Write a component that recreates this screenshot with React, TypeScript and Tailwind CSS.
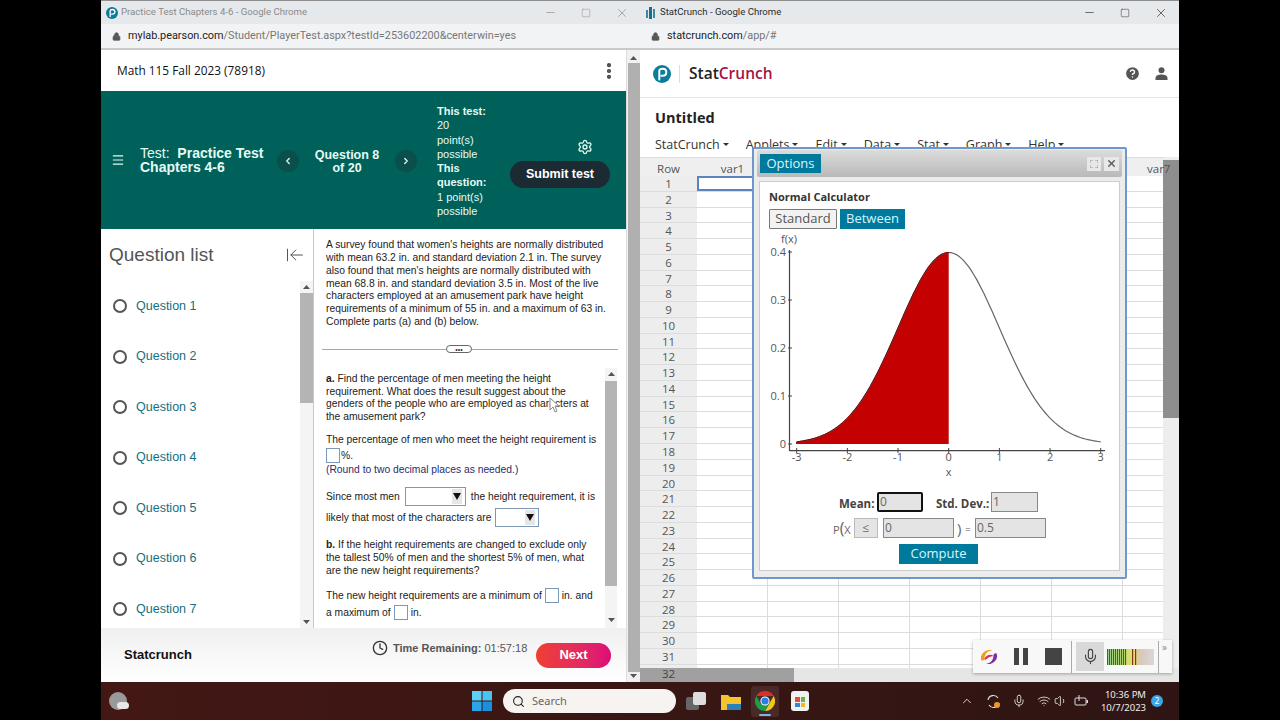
import React from "react";
import { Settings, Menu, ChevronLeft, ChevronRight, Clock, Search, Lock, X, Minus, Square, ArrowLeftToLine, ChevronUp, Mic, Wifi, Volume1, CircleHelp, EllipsisVertical } from "lucide-react";

const sans = "font-['Liberation_Sans',Arial,sans-serif]";
const open = "font-['Open_Sans','Noto_Sans',sans-serif]";

function PearsonLogo({ size }: { size: number }) {
  return (
    <svg width={size} height={size} viewBox="0 0 20 20" className="shrink-0">
      <circle cx="10" cy="10" r="10" fill="#0b7c99" />
      <path d="M7 16 V6.5 C7 5 8.5 4.2 10.5 4.2 C13 4.2 14.8 5.6 14.8 8 C14.8 10.4 13 11.9 10.6 11.9 L9.4 11.9" fill="none" stroke="#fff" strokeWidth="2.2" strokeLinecap="round" />
    </svg>
  );
}

function TitleBar({ title, icon, dim }: { title: string; icon: React.ReactNode; dim?: boolean }) {
  const c = dim ? "text-[#8a8a8a]" : "text-[#2b2b2b]";
  return (
    <div className="h-[24px] shrink-0 flex items-center bg-[#e6e9ec] border-t border-[#8f8f8f] pl-[4px]">
      <div className="w-[14px] flex justify-center">{icon}</div>
      <span className={`ml-[2px] text-[9.6px] font-['Roboto',sans-serif] ${c} flex-1 whitespace-nowrap`}>{title}</span>
      <div className={`flex items-center gap-[24px] pr-[11px] ${c}`}>
        <Minus size={13} strokeWidth={1.2} />
        <Square size={10} strokeWidth={1.2} />
        <X size={14} strokeWidth={1.2} />
      </div>
    </div>
  );
}

function UrlBar({ host, rest }: { host: string; rest: string }) {
  return (
    <div className="h-[26px] shrink-0 flex items-center bg-[#f2f3f4] border-b-2 border-[#c9c9c9] pl-[11px]">
      <Lock size={9} fill="#555" className="text-[#555]" />
      <span className="ml-[7px] text-[10.85px] font-['Roboto',sans-serif] whitespace-nowrap">
        <span className="text-[#222]">{host}</span>
        <span className="text-[#777]">{rest}</span>
      </span>
    </div>
  );
}

function Arrow({ dir, cls }: { dir: "up" | "down"; cls?: string }) {
  return (
    <svg width="7" height="4" viewBox="0 0 7 4" className={cls}>
      <path d={dir === "up" ? "M0 4 L3.5 0 L7 4 Z" : "M0 0 L3.5 4 L7 0 Z"} fill="#555" />
    </svg>
  );
}

function Blank({ w = 14, h = 15 }: { w?: number; h?: number }) {
  return <span style={{ width: w, height: h }} className="inline-block align-middle border border-[#7d97b8] bg-white" />;
}

function Drop({ w }: { w: number }) {
  return (
    <span style={{ width: w }} className="inline-flex h-[19px] align-middle justify-end items-center border border-[#7d97b8] bg-white pr-[3px]">
      <span className="w-[10px] h-[15px] bg-[#e6e6e6] flex items-center justify-center">
        <svg width="8" height="7" viewBox="0 0 8 7"><path d="M0 0 H8 L4 7 Z" fill="#111" /></svg>
      </span>
    </span>
  );
}

function LeftWindow() {
  const qs = [1, 2, 3, 4, 5, 6, 7];
  return (
    <div className="w-[539px] h-[682px] flex flex-col bg-white relative overflow-hidden">
      <TitleBar title="Practice Test Chapters 4-6 - Google Chrome" dim icon={<PearsonLogo size={12} />} />
      <UrlBar host="mylab.pearson.com" rest="/Student/PlayerTest.aspx?testId=253602200&centerwin=yes" />
      <div className="flex-1 flex min-h-0">
        <div className="w-[525px] flex flex-col min-h-0">
          <div className="h-[41px] shrink-0 flex items-center justify-between pl-[16px] pr-[7px] bg-white">
            <span className={`text-[11.85px] text-[#111] ${open}`}>Math 115 Fall 2023 (78918)</span>
            <EllipsisVertical size={20} strokeWidth={3} className="text-[#444]" />
          </div>
          <div className={`h-[138px] shrink-0 bg-[#00605a] flex items-center text-[#e4fbf5] ${sans}`}>
            <Menu size={14} className="ml-[10px] shrink-0" />
            <div className="ml-[15px] w-[130px] text-[14px] leading-[14.5px]">
              Test:&nbsp; <b>Practice Test Chapters 4-6</b>
            </div>
            <div className="ml-[7px] mt-[2px] w-[22px] h-[22px] rounded-full bg-[#0b4f4c] flex items-center justify-center"><ChevronLeft size={10} strokeWidth={3} /></div>
            <div className="w-[96px] mt-[3px] text-center text-[12.5px] leading-[13px] font-bold">Question 8<br />of 20</div>
            <div className="mt-[2px] w-[22px] h-[22px] rounded-full bg-[#0b4f4c] flex items-center justify-center"><ChevronRight size={10} strokeWidth={3} /></div>
            <div className="ml-[20px] mt-[2px] w-[56px] text-[11px] leading-[14.25px]">
              <b>This test:</b><br />20<br />point(s)<br />possible<br /><b>This question:</b><br />1 point(s)<br />possible
            </div>
            <div className="ml-[17px] w-[100px] flex flex-col items-end mt-[7px]">
              <Settings size={16} className="mb-[6px] mr-[17px]" />
              <div className="w-[100px] h-[27px] rounded-full bg-[#1b2a33] text-white text-[12.5px] font-bold flex items-center justify-center">Submit test</div>
            </div>
          </div>
          <div className="flex-1 flex min-h-0">
            <div className="w-[213px] shrink-0 border-r border-[#c8c8c8] flex flex-col min-h-0 overflow-hidden">
              <div className="h-[52px] shrink-0 flex items-center justify-between pl-[8px] pr-[8px]">
                <span className={`text-[19px] text-[#555] ${sans}`}>Question list</span>
                <ArrowLeftToLine size={20} strokeWidth={1.2} className="text-[#555]" />
              </div>
              <div className="flex-1 flex min-h-0">
                <div className="w-[199px] flex flex-col">
                  {qs.map((q) => (
                    <div key={q} className="h-[50.5px] shrink-0 flex items-center pl-[12px]">
                      <span className="w-[14px] h-[14px] rounded-full border-2 border-[#555]" />
                      <span className={`ml-[9px] text-[12.5px] text-[#14707f] ${sans}`}>Question {q}</span>
                    </div>
                  ))}
                </div>
                <div className="w-[13px] bg-[#f4f4f4] flex flex-col items-center pt-[4px] pb-[4px]">
                  <Arrow dir="up" />
                  <div className="mt-[4px] w-full h-[110px] bg-[#b4b4b4]" />
                  <div className="flex-1" />
                  <Arrow dir="down" />
                </div>
              </div>
            </div>
            <div className={`flex-1 flex flex-col min-h-0 ${sans} text-[#222] text-[10.3px]`}>
              <div className="h-[112px] shrink-0 pl-[12px] pt-[10px] leading-[12.85px] whitespace-nowrap">
                A survey found that women's heights are normally distributed<br />
                with mean 63.2 in. and standard deviation 2.1 in. The survey<br />
                also found that men's heights are normally distributed with<br />
                mean 68.8 in. and standard deviation 3.5 in. Most of the live<br />
                characters employed at an amusement park have height<br />
                requirements of a minimum of 55 in. and a maximum of 63 in.<br />
                Complete parts (a) and (b) below.
              </div>
              <div className="h-[16px] shrink-0 flex items-center pl-[8px] pr-[8px]">
                <div className="w-[124px] h-px bg-[#a8a8a8]" />
                <div className="w-[26px] h-[8px] rounded-full border border-[#666] bg-white flex items-center justify-center text-[7px] leading-none text-[#333]">•••</div>
                <div className="flex-1 h-px bg-[#a8a8a8]" />
              </div>
              <div className="flex-1 flex min-h-0 pl-[12px] pr-[8px]">
                <div className="w-[279px] pt-[16px] whitespace-nowrap overflow-hidden">
                  <p className="leading-[12.6px]"><b>a.</b> Find the percentage of men meeting the height<br />requirement. What does the result suggest about the<br />genders of the people who are employed as characters at<br />the amusement park?</p>
                  <p className="mt-[10px] leading-[13px]">The percentage of men who meet the height requirement is</p>
                  <p className="mt-[1px] h-[16px] flex items-center"><Blank /><span className="ml-[1px]">%.</span></p>
                  <p className="leading-[13px] text-[#2b2b6e]">(Round to two decimal places as needed.)</p>
                  <p className="mt-[11px] h-[19px] flex items-center gap-[5px]">Since most men <Drop w={61} /> the height requirement, it is</p>
                  <p className="h-[20px] mt-[1px] flex items-center gap-[4px]">likely that most of the characters are <Drop w={44} /></p>
                  <p className="mt-[12px] leading-[12.6px]"><b>b.</b> If the height requirements are changed to exclude only<br />the tallest 50% of men and the shortest 5% of men, what<br />are the new height requirements?</p>
                  <p className="mt-[10px] h-[17px] flex items-center gap-[3px]">The new height requirements are a minimum of <Blank /> in. and</p>
                  <p className="h-[17px] flex items-center gap-[3px]">a maximum of <Blank /> in.</p>
                </div>
                <div className="w-[12px] bg-[#f4f4f4] flex flex-col items-center mt-[11px] pt-[4px] pb-[6px]">
                  <Arrow dir="up" />
                  <div className="mt-[5px] w-full h-[205px] bg-[#b4b4b4]" />
                  <div className="flex-1" />
                  <Arrow dir="down" />
                </div>
              </div>
            </div>
          </div>
          <div className={`h-[54px] shrink-0 bg-gradient-to-b from-[#f0f0f0] to-white flex items-center ${sans}`}>
            <span className="ml-[23px] w-[65px] text-[13px] font-bold text-[#111]">Statcrunch</span>
            <div className="ml-[183px] flex items-center mt-[-14px] w-[162px]">
              <Clock size={16} className="text-[#333]" />
              <span className="ml-[5px] text-[11px] font-bold text-[#555] whitespace-nowrap">Time Remaining:</span>
              <span className="ml-[3px] text-[11px] text-[#555]">01:57:18</span>
            </div>
            <div className="ml-[2px] w-[75px] h-[25px] rounded-full bg-gradient-to-r from-[#ee3f2f] to-[#dc0a78] text-white text-[13px] font-bold flex items-center justify-center">Next</div>
          </div>
        </div>
        <div className="w-[14px] bg-[#f1f1f1] flex flex-col items-center pt-[6px] pb-[4px] border-l border-[#ddd]">
          <Arrow dir="up" />
          <div className="mt-[3px] w-[12px] flex-1 bg-[#b0b0b0]" />
          <Arrow dir="down" cls="mt-[2px]" />
        </div>
      </div>
      <svg width="12" height="16" viewBox="0 0 12 16" className="absolute left-[448px] top-[397px]">
        <path d="M1 1 V13 L4 10 L6 15 L8 14 L6 9 H10 Z" fill="#fff" stroke="#8a8a8a" strokeWidth="1" />
      </svg>
    </div>
  );
}

function NormalChart() {
  const X = (x: number) => 188.7 + x * 50.67;
  const Y = (d: number) => 212 - d * 480;
  const pdf = (x: number) => Math.exp((-x * x) / 2) / Math.sqrt(2 * Math.PI);
  const pts: string[] = [];
  for (let x = -3; x <= 3.001; x += 0.05) pts.push(`${X(x).toFixed(1)},${Y(pdf(x)).toFixed(1)}`);
  const half: string[] = [];
  for (let x = -3; x <= 0.001; x += 0.05) half.push(`${X(x).toFixed(1)},${Y(pdf(x)).toFixed(1)}`);
  const area = `M${X(-3)},${Y(0)} L${half.join(" L")} L${X(0)},${Y(0)} Z`;
  const txt = "fill-[#555] text-[11px] font-['Open_Sans','Noto_Sans',sans-serif]";
  return (
    <svg width="358" height="258" viewBox="0 0 358 258" className="block">
      <text x="21" y="11" className={txt}>f(x)</text>
      <path d={area} fill="#c40000" />
      <polyline points={pts.join(" ")} fill="none" stroke="#666" strokeWidth="1.2" />
      <path d={`M${X(-3)},${Y(0)} L${half.join(" L")}`} fill="none" stroke="#7a0000" strokeWidth="1" />
      <path d="M29.5 18 V219 M29.5 218.7 H345" stroke="#444" strokeWidth="1.2" fill="none" />
      {[0, 1, 2, 3, 4].map((i) => (
        <g key={i}>
          <path d={`M28 ${Y(i / 10)} H32`} stroke="#444" strokeWidth="1" />
          <text x="26" y={Y(i / 10) + 4} textAnchor="end" className={txt}>{i === 0 ? "0" : `0.${i}`}</text>
        </g>
      ))}
      {[-3, -2, -1, 0, 1, 2, 3].map((v) => (
        <g key={v}>
          <path d={`M${X(v)} 216 V221`} stroke="#444" strokeWidth="1" />
          <text x={X(v)} y="229" textAnchor="middle" className={txt}>{v}</text>
        </g>
      ))}
      <text x={X(0)} y="244" textAnchor="middle" className={txt}>x</text>
    </svg>
  );
}

function Field({ v, w, cls = "border border-[#888]" }: { v: string; w: number; cls?: string }) {
  return (
    <span style={{ width: w }} className={`inline-flex h-[20px] items-center pl-[1px] bg-[#e4e4e4] text-[12px] font-normal text-[#666] ${cls}`}>{v}</span>
  );
}

function Dialog() {
  return (
    <div className={`absolute z-20 left-[112px] top-[147px] w-[375px] h-[432px] bg-[#ececec] border-2 border-[#6f97cb] rounded-[2px] px-[3px] pt-[1px] pb-[3px] flex flex-col ${open}`}>
      <div className="h-[27px] shrink-0 rounded-[2px] bg-gradient-to-b from-[#dcdcdc] to-[#b9b9b9] flex items-center pl-[3px] pr-[3px]">
        <div className="w-[61px] h-[19px] bg-[#007a9c] text-[#d8f6ff] text-[13px] flex items-center justify-center">Options</div>
        <div className="flex-1" />
        <div className="w-[14px] h-[14px] bg-[#e8e8e8] mr-[3px] flex items-center justify-center">
          <svg width="8" height="8" viewBox="0 0 8 8"><path d="M0 3V0H3M5 0H8V3M8 5V8H5M3 8H0V5" fill="none" stroke="#999" /></svg>
        </div>
        <div className="w-[15px] h-[14px] bg-[#e8e8e8] flex items-center justify-center"><X size={11} strokeWidth={3.5} className="text-[#666]" /></div>
      </div>
      <div className="mt-[4px] flex-1 min-h-0 bg-white border border-[#ccc] mx-[2px] mb-[3px] flex flex-col">
        <div className="pl-[9px] pt-[7px] h-[27px] text-[11px] font-bold text-[#333]">Normal Calculator</div>
        <div className="pl-[9px] flex gap-[3px] text-[13px]">
          <div className="w-[68px] h-[20px] border border-[#777] rounded-[1px] bg-[#f2f2f2] text-[#555] flex items-center justify-center">Standard</div>
          <div className="w-[65px] h-[20px] bg-[#007a9c] text-[#d8f6ff] flex items-center justify-center">Between</div>
        </div>
        <div className="mt-[3px]"><NormalChart /></div>
        <div className="mt-[2px] h-[20px] flex items-center pl-[79px] text-[11.5px] font-bold text-[#444]">
          <span className="w-[38px] mt-[3px]">Mean:</span>
          <Field v="0" w={46} cls="border-2 border-[#111] rounded-[2px]" />
          <span className="ml-[13px] w-[55px] mt-[3px] whitespace-nowrap">Std. Dev.:</span>
          <Field v="1" w={47} />
        </div>
        <div className="mt-[6px] h-[20px] flex items-center pl-[73px] text-[#666]">
          <span className="w-[21px] text-[11px] whitespace-nowrap">P<span className="text-[16px]">(</span>X</span>
          <span className="w-[24px] h-[20px] bg-[#e4e4e4] border border-[#bbb] text-[12px] flex items-center justify-center">≤</span>
          <Field v="0" w={71} cls="ml-[5px] border border-[#888]" />
          <span className="ml-[3px] text-[15px] w-[7px]">)</span>
          <span className="ml-[1px] w-[10px] text-[10px] mt-[2px]">=</span>
          <Field v="0.5" w={71} />
        </div>
        <div className="mt-[6px] flex pl-[139px]">
          <div className="w-[79px] h-[20px] bg-[#007a9c] text-[#d8f6ff] text-[13px] flex items-center justify-center">Compute</div>
        </div>
      </div>
    </div>
  );
}

function Recorder() {
  return (
    <div className="absolute z-20 left-[333px] top-[640px] w-[199px] h-[33px] bg-[#f8f8f8] shadow-[0_1px_3px_rgba(0,0,0,0.3)] flex items-center">
      <svg width="22" height="22" viewBox="0 0 20 20" className="ml-[5px]">
        <path d="M3 13 C1 7 8 2 13 4 C9 4 6 7 6 11 C6 13 4 14 3 13 Z" fill="#e8a020" />
        <path d="M17 7 C19 13 12 18 7 16 C11 16 14 13 14 9 C14 7 16 6 17 7 Z" fill="#7b2fa5" />
        <path d="M6 11 C8 8 12 7 14 9 C11 9 9 11 6 13 Z" fill="#d83050" />
      </svg>
      <div className="ml-[14px] flex gap-[4px]"><span className="w-[5px] h-[17px] bg-[#444]" /><span className="w-[5px] h-[17px] bg-[#444]" /></div>
      <span className="ml-[17px] w-[17px] h-[17px] bg-[#444]" />
      <span className="ml-[9px] w-px h-[32px] bg-[#aaa]" />
      <div className="ml-[4px] w-[28px] h-[29px] bg-[#d9d9d9] flex items-center justify-center"><Mic size={17} strokeWidth={1.6} className="text-[#444]" /></div>
      <svg width="47" height="16" viewBox="0 0 47 16" className="ml-[3px]">
        <defs>
          <linearGradient id="fade" x1="0" x2="1" y1="0" y2="0">
            <stop offset="0" stopColor="#a8d8a0" />
            <stop offset="0.42" stopColor="#cde070" />
            <stop offset="0.55" stopColor="#e8e060" />
            <stop offset="0.7" stopColor="#d8c8b8" />
            <stop offset="1" stopColor="#d8d8d8" />
          </linearGradient>
        </defs>
        <rect x="0" y="0" width="47" height="16" fill="url(#fade)" />
        {Array.from({ length: 10 }).map((_, i) => (
          <rect key={i} x={i * 2} y="0" width="1.1" height="16" fill="#1c7a1c" />
        ))}
        <rect x="25" y="0" width="1.2" height="16" fill="#8a3030" />
        <rect x="28" y="0" width="1.2" height="16" fill="#8a3030" />
      </svg>
      <span className="ml-[4px] w-px h-[32px] bg-[#aaa]" />
      <span className="ml-[3px] text-[10px] text-[#888] self-start leading-[12px] mt-[1px]">»</span>
    </div>
  );
}

function RightWindow() {
  const rows = Array.from({ length: 32 }, (_, i) => i + 1);
  const cols = [0, 1, 2, 3, 4, 5];
  return (
    <div className={`w-[539px] h-[682px] flex flex-col bg-white relative overflow-hidden ${open}`}>
      <TitleBar title="StatCrunch - Google Chrome" icon={<svg width="10" height="12" viewBox="0 0 10 12"><rect x="0" y="3" width="2" height="8" fill="#3a8aa8" /><rect x="3" y="0" width="3" height="12" fill="#1f6d8c" /><rect x="7" y="2" width="2" height="9" fill="#3a8aa8" /></svg>} />
      <UrlBar host="statcrunch.com" rest="/app/#" />
      <div className="h-[48px] shrink-0 flex items-center pl-[13px] pr-[11px] border-b border-[#e3e3e3]">
        <PearsonLogo size={18} />
        <span className="ml-[8px] w-px h-[18px] bg-[#ddd]" />
        <span className="ml-[9px] text-[15.5px] font-semibold text-[#222] flex-1">Stat<span className="text-[#a8123f]">Crunch</span></span>
        <CircleHelp size={17} fill="#555" className="text-white" />
        <svg width="13" height="13" viewBox="0 0 13 13" className="ml-[14px]">
          <circle cx="6.5" cy="3.3" r="3" fill="#555" />
          <path d="M0.5 13 V11 C0.5 8.6 3.5 7.5 6.5 7.5 C9.5 7.5 12.5 8.6 12.5 11 V13 Z" fill="#555" />
        </svg>
      </div>
      <div className="h-[38px] shrink-0 flex items-end pl-[15px] pb-[8px] text-[14.5px] font-bold leading-[20px] text-[#222]">Untitled</div>
      <div className="h-[21px] shrink-0 flex items-center pl-[15px] pb-[2px] text-[12.5px] text-[#333] gap-[17px] overflow-hidden">
        {["StatCrunch", "Applets", "Edit", "Data", "Stat", "Graph", "Help"].map((m) => (
          <span key={m} className="flex items-center gap-[3px] whitespace-nowrap">{m}<span className="w-0 h-0 border-x-[3px] border-x-transparent border-t-[3px] border-t-[#333] mb-[3px]" /></span>
        ))}
      </div>
      <div className="flex-1 min-h-0 flex">
        <div className="flex-1 min-w-0 flex flex-col">
          <div className="h-[19px] shrink-0 flex relative z-10 bg-[#efefef] border-t border-[#ddd] text-[11.5px] text-[#555]">
            <div className="w-[57px] shrink-0 text-center leading-[22px]">Row</div>
            <div className="w-[71px] shrink-0 text-center leading-[22px]">var1</div>
            <div className="ml-[379px] shrink-0 leading-[22px] whitespace-nowrap">var7</div>
          </div>
          <div className="flex-1 min-h-0 overflow-hidden">
            {rows.map((r) => (
              <div key={r} className="h-[15.78px] flex border-b border-[#dcdcdc] text-[11.5px] text-[#555]">
                <div className="w-[57px] shrink-0 bg-[#ededed] text-center leading-[15px]">{r}</div>
                {cols.map((c) => (
                  <div key={c} className={r === 1 && c === 0 ? "w-[71px] shrink-0 border-2 border-[#5b84bd]" : "w-[71px] shrink-0 border-r border-[#dcdcdc]"} />
                ))}
              </div>
            ))}
          </div>
        </div>
        <div className="w-[16px] shrink-0 bg-[#ededed] flex flex-col">
          <div className="mt-[3px] h-[258px] bg-[#8e8e8e]" />
        </div>
      </div>
      <div className="absolute left-0 right-0 top-[668px] h-[14px] bg-[#e6e6e6]"><div className="h-full w-[154px] bg-[#a0a0a0]" /></div>
      <div className="absolute left-0 w-[57px] top-[665px] text-center text-[11.5px] text-[#444]">32</div>
      <Dialog />
      <Recorder />
    </div>
  );
}

function Taskbar() {
  return (
    <div className="h-[38px] shrink-0 bg-gradient-to-r from-[#431714] to-[#2e1513] flex items-center text-[#eee] relative">
      <div className="ml-[8px] w-[18px] h-[18px] rounded-full bg-[#9a9a9a] relative">
        <span className="absolute right-[-2px] bottom-[1px] w-[12px] h-[7px] rounded-full bg-[#e8e8e8]" />
      </div>
      <svg width="20" height="20" viewBox="0 0 20 20" className="ml-[345px]">
        <rect x="0" y="0" width="9.5" height="9.5" fill="#5fd0f5" /><rect x="10.5" y="0" width="9.5" height="9.5" fill="#4cc2f1" />
        <rect x="0" y="10.5" width="9.5" height="9.5" fill="#2aa5ea" /><rect x="10.5" y="10.5" width="9.5" height="9.5" fill="#1a8fe0" />
      </svg>
      <div className="ml-[11px] w-[173px] h-[24px] rounded-full bg-[#f6f3f1] flex items-center pl-[9px] text-[#555]">
        <Search size={13} strokeWidth={2} className="text-[#222]" />
        <span className="ml-[7px] text-[11px] font-['Noto_Sans',sans-serif] text-[#666]">Search</span>
      </div>
      <div className="ml-[10px] relative w-[20px] h-[18px]">
        <span className="absolute left-0 bottom-0 w-[13px] h-[13px] bg-[#666] rounded-[2px]" />
        <span className="absolute right-0 top-0 w-[13px] h-[13px] bg-[#ddd] rounded-[2px]" />
      </div>
      <svg width="20" height="17" viewBox="0 0 20 17" className="ml-[15px]">
        <path d="M0 2 H7 L9 4 H20 V17 H0 Z" fill="#f4c430" />
        <rect x="6" y="11" width="14" height="6" fill="#2d7fb8" />
      </svg>
      <div className="ml-[10px] w-[28px] h-[31px] bg-[#4a2a28] rounded-[3px] flex flex-col items-center justify-center relative">
        <svg width="20" height="20" viewBox="0 0 20 20">
          <path d="M10 0 A10 10 0 0 1 18.7 5 H10 Z" fill="#d93025" />
          <path d="M1.3 5 A10 10 0 0 1 10 0 V5 Z" fill="#d93025" />
          <path d="M18.7 5 A10 10 0 0 1 10 20 L14 13 Z" fill="#f5c518" />
          <path d="M1.3 5 A10 10 0 0 0 10 20 L14 13 H6 Z" fill="#1e9e4a" />
          <circle cx="10" cy="10" r="4.6" fill="#fff" />
          <circle cx="10" cy="10" r="3.6" fill="#2a7de1" />
        </svg>
        <span className="absolute bottom-[1px] w-[12px] h-[2px] rounded bg-[#7ab6e8]" />
      </div>
      <div className="ml-[12px] w-[18px] h-[20px] rounded-[3px] bg-[#f2f2f2] grid grid-cols-2 gap-[1px] p-[4px] pt-[6px]">
        <span className="bg-[#e0503c]" /><span className="bg-[#6cb33f]" /><span className="bg-[#2b88d8]" /><span className="bg-[#f2b722]" />
      </div>
      <div className="flex-1" />
      <ChevronUp size={14} strokeWidth={1.5} className="mr-[12px]" />
      <svg width="15" height="15" viewBox="0 0 15 15" className="mr-[11px]">
        <path d="M2 6 A5.5 5.5 0 0 1 12 4 M13 9 A5.5 5.5 0 0 1 3 11" fill="none" stroke="#ddd" strokeWidth="1.2" />
        <circle cx="11" cy="11" r="3" fill="#f0962e" />
      </svg>
      <Mic size={14} strokeWidth={1.4} className="mr-[11px]" />
      <Wifi size={14} strokeWidth={1.4} className="mr-[3px]" />
      <Volume1 size={14} strokeWidth={1.4} className="mr-[6px]" />
      <svg width="15" height="13" viewBox="0 0 15 13" className="mr-[7px]">
        <rect x="1" y="3" width="11" height="7" rx="1" fill="none" stroke="#ddd" />
        <rect x="12.5" y="5" width="1.5" height="3" fill="#ddd" />
        <path d="M5 0 V6" stroke="#ddd" />
      </svg>
      <div className="w-[50px] text-right text-[9.5px] leading-[13px] font-['Noto_Sans',sans-serif]">10:36 PM<br />10/7/2023</div>
      <span className="ml-[5px] mr-[16px] w-[12px] h-[12px] rounded-full bg-[#3aa6e8] text-[8px] text-white flex items-center justify-center font-['Noto_Sans',sans-serif]">2</span>
    </div>
  );
}

export default function App() {
  return (
    <div className="w-[1280px] h-[720px] bg-black flex overflow-hidden">
      <div className="ml-[101px] w-[1078px] h-[720px] flex flex-col">
        <div className="flex h-[682px] shrink-0">
          <LeftWindow />
          <RightWindow />
        </div>
        <Taskbar />
      </div>
    </div>
  );
}
